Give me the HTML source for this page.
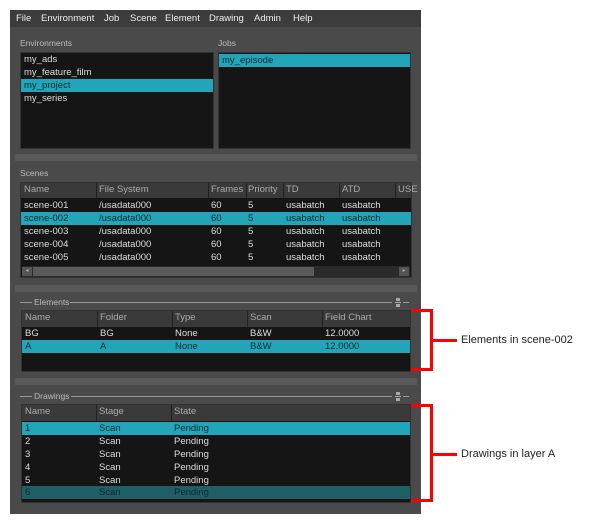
<!DOCTYPE html>
<html><head><meta charset="utf-8"><style>
*{margin:0;padding:0;box-sizing:border-box}
body{width:608px;height:524px;background:#fff;position:relative;overflow:hidden;font-family:"Liberation Sans",sans-serif;font-size:9.5px;color:#ddd}
.a{position:absolute}
.win{left:10px;top:10px;width:411px;height:504px;background:#4a4a4a}
.menu{left:10px;top:10px;width:411px;height:17px;background:#3c3c3c;font-size:9.5px;color:#eee}
.menu span{position:absolute;top:3px}
.box{background:#151515;border:1px solid #333}
.lbl{color:#bbb;font-size:8.5px}
.sep{background:#595959;height:7px;left:15px;width:402px}
.hdr{background:#3a3a3a;color:#aaa;height:15px}
.hdr span,.row span{position:absolute;top:1px}
.row{height:13px;left:0;right:0}
.hl{background:#22a5b8;color:#0d2a30}
.dk{background:#1f5f66;color:#0d2a30}
.vl{position:absolute;top:0;bottom:0;width:1px;background:#222}
.red{background:#f00;position:absolute}
.ann{color:#222;font-size:11px;position:absolute}
.gl{position:absolute;height:1px;background:#999}
.hand{position:absolute;width:6px;height:9px}
.hand:before{content:"";position:absolute;left:0;top:4px;width:6px;height:1px;background:#aaa}
.hand:after{content:"";position:absolute;left:1px;top:0;width:4px;height:9px;border-top:3px solid #aaa;border-bottom:3px solid #aaa;box-sizing:border-box}
</style></head><body>
<div class="a win"></div>
<div class="a menu">
<span style="left:6px">File</span><span style="left:31px">Environment</span><span style="left:94px">Job</span><span style="left:120px">Scene</span><span style="left:155px">Element</span><span style="left:199px">Drawing</span><span style="left:244px">Admin</span><span style="left:283px">Help</span>
</div>
<div class="a lbl" style="left:20px;top:38px">Environments</div>
<div class="a lbl" style="left:218px;top:38px">Jobs</div>
<div class="a box" style="left:20px;top:52px;width:194px;height:97px">
<div class="a row" style="top:0px"><span style="left:3px">my_ads</span></div>
<div class="a row" style="top:13px"><span style="left:3px">my_feature_film</span></div>
<div class="a row hl" style="top:26px"><span style="left:3px">my_project</span></div>
<div class="a row" style="top:39px"><span style="left:3px">my_series</span></div>
</div>
<div class="a box" style="left:218px;top:52px;width:193px;height:97px">
<div class="a row hl" style="top:1px"><span style="left:3px">my_episode</span></div>
</div>
<div class="a sep" style="top:154px"></div>
<div class="a lbl" style="left:20px;top:168px">Scenes</div>
<div class="a box" style="left:20px;top:182px;width:392px;height:96px">
<div class="a hdr" style="left:0;right:0;top:0">
<span style="left:3px">Name</span><span style="left:78px">File System</span><span style="left:190px">Frames</span><span style="left:227px">Priority</span><span style="left:265px">TD</span><span style="left:321px">ATD</span><span style="left:377px">USE</span>
<div class="vl" style="left:75px"></div><div class="vl" style="left:187px"></div><div class="vl" style="left:225px"></div><div class="vl" style="left:262px"></div><div class="vl" style="left:318px"></div><div class="vl" style="left:374px"></div>
</div>
<div class="a row" style="top:16px"><span style="left:3px">scene-001</span><span style="left:78px">/usadata000</span><span style="left:190px">60</span><span style="left:227px">5</span><span style="left:265px">usabatch</span><span style="left:321px">usabatch</span></div>
<div class="a row hl" style="top:29px"><span style="left:3px">scene-002</span><span style="left:78px">/usadata000</span><span style="left:190px">60</span><span style="left:227px">5</span><span style="left:265px">usabatch</span><span style="left:321px">usabatch</span></div>
<div class="a row" style="top:42px"><span style="left:3px">scene-003</span><span style="left:78px">/usadata000</span><span style="left:190px">60</span><span style="left:227px">5</span><span style="left:265px">usabatch</span><span style="left:321px">usabatch</span></div>
<div class="a row" style="top:55px"><span style="left:3px">scene-004</span><span style="left:78px">/usadata000</span><span style="left:190px">60</span><span style="left:227px">5</span><span style="left:265px">usabatch</span><span style="left:321px">usabatch</span></div>
<div class="a row" style="top:68px"><span style="left:3px">scene-005</span><span style="left:78px">/usadata000</span><span style="left:190px">60</span><span style="left:227px">5</span><span style="left:265px">usabatch</span><span style="left:321px">usabatch</span></div>
<div class="a" style="left:1px;right:1px;top:83px;height:11px;background:#2a2a2a"></div>
<div class="a" style="left:12px;width:281px;top:84px;height:9px;background:#5a5a5a"></div>
<div class="a" style="left:1px;top:84px;width:10px;height:9px;background:#555;color:#aaa;font-size:6px;text-align:center;line-height:9px">◂</div>
<div class="a" style="right:2px;top:84px;width:10px;height:9px;background:#555;color:#aaa;font-size:6px;text-align:center;line-height:9px">▸</div>
</div>
<div class="a sep" style="top:285px"></div>
<div class="gl" style="left:20px;width:12px;top:302px"></div>
<div class="a lbl" style="left:34px;top:297px">Elements</div>
<div class="gl" style="left:70px;width:322px;top:302px"></div>
<div class="hand" style="left:395px;top:298px"></div>
<div class="gl" style="left:403px;width:6px;top:302px"></div>
<div class="a box" style="left:21px;top:310px;width:390px;height:62px">
<div class="a hdr" style="left:0;right:0;top:0;height:16px">
<span style="left:3px">Name</span><span style="left:78px">Folder</span><span style="left:153px">Type</span><span style="left:228px">Scan</span><span style="left:303px">Field Chart</span>
<div class="vl" style="left:75px"></div><div class="vl" style="left:150px"></div><div class="vl" style="left:225px"></div><div class="vl" style="left:300px"></div>
</div>
<div class="a row" style="top:16px"><span style="left:3px">BG</span><span style="left:78px">BG</span><span style="left:153px">None</span><span style="left:228px">B&amp;W</span><span style="left:303px">12.0000</span></div>
<div class="a row hl" style="top:29px"><span style="left:3px">A</span><span style="left:78px">A</span><span style="left:153px">None</span><span style="left:228px">B&amp;W</span><span style="left:303px">12.0000</span></div>
</div>
<div class="a sep" style="top:378px"></div>
<div class="gl" style="left:20px;width:12px;top:396px"></div>
<div class="a lbl" style="left:34px;top:391px">Drawings</div>
<div class="gl" style="left:71px;width:321px;top:396px"></div>
<div class="hand" style="left:395px;top:392px"></div>
<div class="gl" style="left:403px;width:6px;top:396px"></div>
<div class="a box" style="left:21px;top:404px;width:390px;height:99px">
<div class="a hdr" style="left:0;right:0;top:0;height:16px">
<span style="left:3px">Name</span><span style="left:77px">Stage</span><span style="left:152px">State</span>
<div class="vl" style="left:74px"></div><div class="vl" style="left:149px"></div>
</div>
<div class="a row hl" style="top:17px"><span style="left:3px">1</span><span style="left:77px">Scan</span><span style="left:152px">Pending</span></div>
<div class="a row" style="top:30px"><span style="left:3px">2</span><span style="left:77px">Scan</span><span style="left:152px">Pending</span></div>
<div class="a row" style="top:43px"><span style="left:3px">3</span><span style="left:77px">Scan</span><span style="left:152px">Pending</span></div>
<div class="a row" style="top:56px"><span style="left:3px">4</span><span style="left:77px">Scan</span><span style="left:152px">Pending</span></div>
<div class="a row" style="top:69px"><span style="left:3px">5</span><span style="left:77px">Scan</span><span style="left:152px">Pending</span></div>
<div class="a row dk" style="top:81px"><span style="left:3px">6</span><span style="left:77px">Scan</span><span style="left:152px">Pending</span></div>
</div>
<div class="red" style="left:411px;top:309px;width:22px;height:3px"></div>
<div class="red" style="left:430px;top:309px;width:3px;height:62px"></div>
<div class="red" style="left:411px;top:368px;width:22px;height:3px"></div>
<div class="red" style="left:430px;top:339px;width:27px;height:3px"></div>
<div class="ann" style="left:461px;top:334px">Elements in scene-002</div>
<div class="red" style="left:411px;top:404px;width:22px;height:3px"></div>
<div class="red" style="left:430px;top:404px;width:3px;height:98px"></div>
<div class="red" style="left:411px;top:499px;width:22px;height:3px"></div>
<div class="red" style="left:430px;top:453px;width:27px;height:3px"></div>
<div class="ann" style="left:461px;top:448px">Drawings in layer A</div>
</body></html>
